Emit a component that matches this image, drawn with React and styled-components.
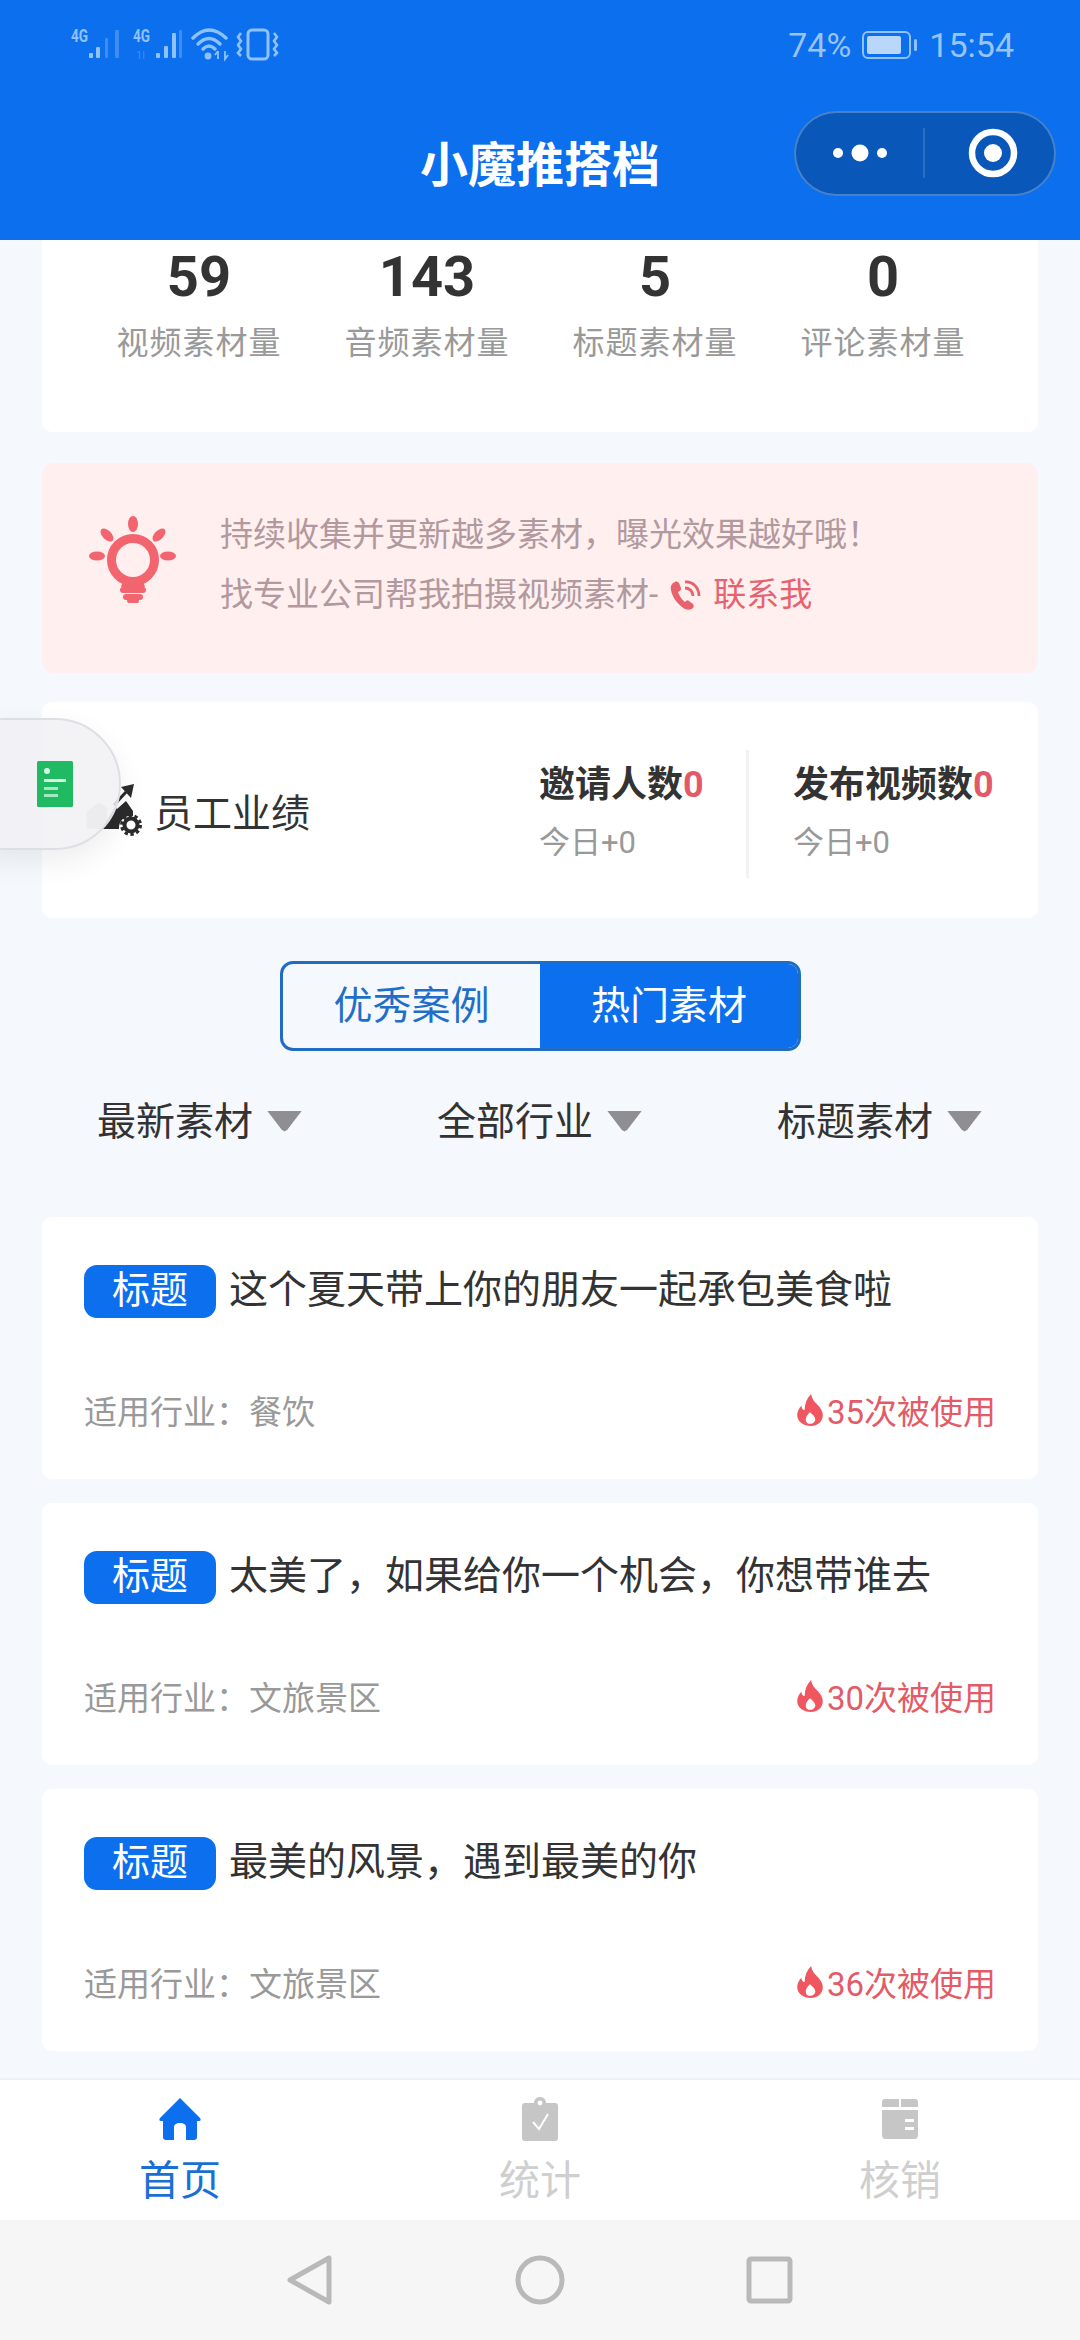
import React from "react";
import styled, { createGlobalStyle } from "styled-components";

const Global = createGlobalStyle`
  html, body { margin: 0; padding: 0; background: #f5f8fd; }
  * { box-sizing: border-box; }
  body { font-family: Roboto, "Noto Sans CJK SC", sans-serif; }
`;

const Page = styled.div`
  position: relative;
  width: 1080px;
  height: 2340px;
  overflow: hidden;
  display: flex;
  flex-direction: column;
  background: #f5f8fd;
`;
const TopBlue = styled.div`
  height: 240px;
  background: #0b6fee;
  flex: none;
`;
const StatusBar = styled.div`
  height: 70px;
  display: flex;
  justify-content: space-between;
  align-items: flex-start;
  padding: 24px 66px 0 68px;
  color: #98c4f8;
`;
const StatusRight = styled.div`
  display: flex;
  align-items: center;
  gap: 11px;
  font-size: 34px;
  line-height: 42px;
`;
const Header = styled.div`
  height: 170px;
  display: grid;
  grid-template-columns: 1fr auto 1fr;
  align-items: center;
`;
const Title = styled.h1`
  grid-column: 2;
  margin: 22px 0 0;
  font-size: 48px;
  line-height: 60px;
  font-weight: 700;
  color: #fff;
`;
const Capsule = styled.div`
  grid-column: 3;
  justify-self: end;
  margin: 0 24px 4px 0;
  width: 262px;
  height: 85px;
  border-radius: 43px;
  background: #0957b8;
  border: 2px solid rgba(255, 255, 255, 0.25);
  display: flex;
  align-items: center;
`;
const CapsuleCell = styled.div`
  width: 129px;
  height: 50px;
  display: flex;
  align-items: center;
  justify-content: center;
  padding-left: ${(p) => (p.$divider ? "0" : "6px")};
  border-right: ${(p) => (p.$divider ? "2px solid rgba(255,255,255,.14)" : "none")};
`;

const Main = styled.main`
  flex: 1;
  min-height: 0;
  overflow: hidden;
`;
const Card = styled.section`
  margin: 0 42px;
  background: #fff;
  border-radius: 10px;
`;
const StatsCard = styled(Card)`
  display: grid;
  grid-template-columns: repeat(4, 228px);
  padding: 2px 0 0 43px;
  height: 192px;
  border-radius: 0 0 10px 10px;
`;
const Stat = styled.div`
  text-align: center;
`;
const StatNumber = styled.div`
  font-size: 56px;
  line-height: 70px;
  font-weight: 700;
  color: #333;
`;
const StatLabel = styled.div`
  margin-top: 9px;
  font-size: 32px;
  line-height: 44px;
  color: #999;
  letter-spacing: 1px;
`;
const Banner = styled.section`
  margin: 31px 42px 0;
  height: 210px;
  background: #ffefef;
  border-radius: 12px;
  display: flex;
  align-items: center;
  padding: 0 0 6px 46px;
  gap: 42px;
`;
const BannerText = styled.div`
  font-size: 33px;
  line-height: 60px;
  color: #b2999e;
`;
const BannerLine = styled.div`
  display: flex;
  align-items: center;
  white-space: nowrap;
`;
const ContactLink = styled.span`
  display: inline-flex;
  align-items: center;
  gap: 9px;
  margin-left: 12px;
  color: #e8626e;
`;
const BulbWrap = styled.div`
  display: flex;
  margin-top: -8px;
`;
const StaffCard = styled(Card)`
  margin-top: 29px;
  height: 216px;
  display: flex;
  align-items: center;
  padding: 0 43px;
`;
const StaffName = styled.div`
  display: flex;
  align-items: center;
  gap: 11px;
  font-size: 39px;
  color: #333;
`;
const StaffStats = styled.div`
  margin: 8px 0 0 auto;
  display: flex;
`;
const StaffStat = styled.div`
  height: 128px;
  width: ${(p) => p.$w}px;
  padding-left: ${(p) => p.$pad || 0}px;
  border-right: ${(p) => (p.$divider ? "3px solid #f1f2f5" : "none")};
`;
const StaffTitle = styled.div`
  font-size: 36px;
  line-height: 70px;
  font-weight: 700;
  color: #333;
  white-space: nowrap;
`;
const RedValue = styled.span`
  color: #e4596a;
`;
const StaffSub = styled.div`
  font-size: 31px;
  line-height: 46px;
  color: #999;
`;
const TabSwitch = styled.div`
  margin: 43px 0 0 280px;
  width: 521px;
  height: 90px;
  border: 3px solid #1f6cc4;
  border-radius: 13px;
  display: grid;
  grid-template-columns: 257px 1fr;
  overflow: hidden;
`;
const TabItem = styled.div`
  display: flex;
  align-items: center;
  justify-content: center;
  padding-bottom: 8px;
  font-size: 39px;
  color: ${(p) => (p.$active ? "#fff" : "#1f6fc8")};
  background: ${(p) => (p.$active ? "#0b6fee" : "transparent")};
`;
const Filters = styled.div`
  margin-top: 46px;
  padding-left: 97px;
  height: 50px;
  display: grid;
  grid-template-columns: repeat(3, 340px);
`;
const FilterItem = styled.div`
  display: flex;
  align-items: center;
  gap: 14px;
  font-size: 39px;
  line-height: 50px;
  color: #333;
`;
const Caret = styled.span`
  width: 35px;
  height: 21px;
  margin-top: -2px;
  background: #8e8e93;
  clip-path: polygon(0 0, 100% 0, 58% 92%, 50% 100%, 42% 92%);
`;
const MaterialList = styled.div`
  margin-top: 70px;
  display: flex;
  flex-direction: column;
  gap: 24px;
`;
const MaterialCard = styled(Card)`
  padding: 48px 42px 47px;
`;
const MaterialHead = styled.div`
  display: flex;
  align-items: flex-start;
  gap: 13px;
`;
const MaterialTag = styled.span`
  width: 132px;
  height: 53px;
  background: #0b6fee;
  color: #fff;
  border-radius: 13px;
  font-size: 38px;
  line-height: 50px;
  text-align: center;
`;
const MaterialTitle = styled.div`
  font-size: 39px;
  line-height: 50px;
  color: #333;
  white-space: nowrap;
`;
const MaterialFoot = styled.div`
  margin-top: 70px;
  height: 44px;
  display: flex;
  justify-content: space-between;
  align-items: center;
`;
const Industry = styled.div`
  font-size: 33px;
  color: #999;
`;
const UsedCount = styled.div`
  display: flex;
  align-items: center;
  gap: 3px;
  font-size: 33px;
  color: #e35b67;
`;
const TabBar = styled.nav`
  flex: none;
  height: 142px;
  background: #fff;
  border-top: 2px solid #f0f1f4;
  display: grid;
  grid-template-columns: repeat(3, 360px);
  padding-top: 17px;
`;
const TabBarItem = styled.div`
  display: flex;
  flex-direction: column;
  align-items: center;
  font-size: 41px;
  color: ${(p) => (p.$active ? "#1a6fd6" : "#cfcfcf")};
`;
const TabIcon = styled.div`
  height: 44px;
  display: flex;
  align-items: center;
  justify-content: center;
`;
const TabLabel = styled.div`
  margin-top: 12px;
  line-height: 56px;
`;
const SystemNav = styled.div`
  flex: none;
  height: 120px;
  background: #f6f6f6;
  display: flex;
  align-items: center;
  justify-content: center;
  gap: 170px;
`;
const FloatPill = styled.div`
  position: absolute;
  left: -60px;
  top: 718px;
  width: 181px;
  height: 132px;
  border-radius: 66px;
  border: 2px solid #dedfe4;
  background: rgba(241, 241, 244, 0.86);
  box-shadow: 0 12px 30px rgba(0, 0, 0, 0.07);
  display: flex;
  align-items: center;
  padding-left: 95px;
`;

const L = "#8fc2fc";
const D = "#3f8cf2";

const LeftStatusIcons = () => (
  <svg width="215" height="38" viewBox="68 24 215 38">
    <g fontFamily="Roboto, sans-serif" fontWeight="700" fontSize="18" fill={L}>
      <text x="71" y="42" textLength="17" lengthAdjust="spacingAndGlyphs">4G</text>
      <text x="133" y="42" textLength="17" lengthAdjust="spacingAndGlyphs">4G</text>
    </g>
    <text x="136" y="59" fontFamily="Roboto, sans-serif" fontSize="11" fill={D}>1l</text>
    <rect x="89" y="53" width="4" height="5" rx="1" fill={L} />
    <rect x="96" y="47" width="4" height="11" rx="1" fill={L} />
    <rect x="105" y="38" width="3" height="20" rx="1" fill={D} />
    <rect x="115" y="30" width="4" height="28" rx="1" fill={D} />
    <rect x="156" y="53" width="4" height="5" rx="1" fill={L} />
    <rect x="164" y="46" width="4" height="12" rx="1" fill={L} />
    <rect x="172" y="33" width="4" height="25" rx="1" fill={L} />
    <rect x="179" y="30" width="3" height="28" rx="1" fill={D} />
    <g fill="none" stroke={L} strokeWidth="3.4" strokeLinecap="round">
      <path d="M193 38 Q209 22 226 38" />
      <path d="M198 44 Q209 33 220 44" />
      <path d="M203 49 Q209 43 215 49" />
    </g>
    <circle cx="208" cy="56" r="3.4" fill={L} />
    <path d="M218 51v8M215 55l3-4M225 51v8l3-4" fill="none" stroke={L} strokeWidth="1.8" />
    <rect x="248" y="30" width="20" height="29" rx="4" fill="none" stroke={L} strokeWidth="3" />
    <path
      d="M241 33l-3 4 3 4-3 4 3 4-3 4 3 3M274 33l3 4-3 4 3 4-3 4 3 4-3 3"
      fill="none"
      stroke={L}
      strokeWidth="2.6"
    />
  </svg>
);

const Battery = () => (
  <svg width="56" height="28" viewBox="0 0 56 28">
    <rect x="1" y="1" width="47" height="26" rx="5" fill="none" stroke="#8fc2fc" strokeWidth="2" />
    <rect x="5" y="5" width="34" height="18" rx="2" fill="#b9d7fb" />
    <rect x="52" y="8" width="3" height="12" rx="1.5" fill="#8fc2fc" />
  </svg>
);

const Dots = () => (
  <svg width="54" height="20" viewBox="0 0 54 20">
    <circle cx="5" cy="10" r="5" fill="#fff" />
    <circle cx="27" cy="10" r="8.5" fill="#fff" />
    <circle cx="49" cy="10" r="5" fill="#fff" />
  </svg>
);

const Target = () => (
  <svg width="52" height="50" viewBox="0 0 52 50">
    <circle cx="26" cy="25" r="21" fill="none" stroke="#fff" strokeWidth="6.5" />
    <circle cx="26" cy="25" r="9" fill="#fff" />
  </svg>
);

const Bulb = () => (
  <svg width="90" height="90" viewBox="88 518 90 90">
    <g fill="#f2646e">
      <ellipse cx="133" cy="526" rx="5" ry="8" />
      <ellipse cx="107" cy="537" rx="4.5" ry="8" transform="rotate(-45 107 537)" />
      <ellipse cx="159" cy="537" rx="4.5" ry="8" transform="rotate(45 159 537)" />
      <ellipse cx="97" cy="558" rx="8" ry="4.5" />
      <ellipse cx="168" cy="558" rx="8" ry="4.5" />
      <path d="M124 580h18l3 9h-24z" />
      <rect x="120" y="589" width="26" height="6" rx="3" />
      <rect x="123" y="596" width="20" height="6" rx="3" />
      <rect x="127" y="601" width="12" height="4" rx="2" />
    </g>
    <circle cx="133" cy="562" r="21.5" fill="none" stroke="#f2646e" strokeWidth="9" />
  </svg>
);

const Phone = () => (
  <svg width="34" height="32" viewBox="0 0 34 32">
    <path
      d="M5 3c-3 1-5 4-4 8 1 7 7 15 14 19 3 1 6 1 8-1 1-1 1-3 0-4l-4-3c-1-1-2-1-3 0l-1 1c-3-2-6-7-7-10l2-1c1-1 1-2 1-3L9 4C8 3 6 2 5 3z"
      fill="#e8626e"
    />
    <path d="M15 3c7-1 14 5 14 14M15 9c4 0 8 3 8 8" fill="none" stroke="#e8626e" strokeWidth="2.8" />
  </svg>
);

const StaffIcon = () => (
  <svg width="58" height="54" viewBox="85 782 58 54">
    <path d="M86 811l13-10 8 6v21H87z" fill="#cfcfcf" />
    <path d="M102 828l13-22 3 3 0 19z" fill="#2b2b2b" />
    <path d="M117 808l9-8 7 10v5a12 12 0 0 0-14 13h-2z" fill="#2b2b2b" />
    <path d="M114 804l12-13" stroke="#2b2b2b" strokeWidth="3" fill="none" />
    <path d="M121 786l13-3-3 14z" fill="#2b2b2b" />
    <circle cx="131" cy="824" r="6.5" fill="#fff" stroke="#2b2b2b" strokeWidth="4" />
    <circle cx="131" cy="824" r="9.5" fill="none" stroke="#2b2b2b" strokeWidth="3" strokeDasharray="3.4 2.6" />
  </svg>
);

const Doc = () => (
  <svg width="36" height="46" viewBox="0 0 36 46">
    <rect width="36" height="46" rx="1.5" fill="#1fba62" />
    <circle cx="10" cy="10" r="3" fill="#d6f5e2" />
    <rect x="7" y="18" width="22" height="3" fill="#d6f5e2" />
    <rect x="7" y="26" width="14" height="3" fill="#a5e7c2" />
    <rect x="7" y="33" width="14" height="3" fill="#a5e7c2" />
  </svg>
);

const Flame = () => (
  <svg width="28" height="32" viewBox="0 0 26 30">
    <path
      d="M14 0c1 5 3 7 6 10 3 3 5 6 5 10 0 6-5 10-11 10C7 30 1 26 1 20c0-4 2-7 4-9 0 2 1 4 3 4 0-6 2-11 6-15zM13 17c-2 2-4 4-4 7 0 2 1 4 4 4s5-2 5-4c0-3-3-5-5-7z"
      fill="#f0565f"
      fillRule="evenodd"
    />
  </svg>
);

const HomeIcon = () => (
  <svg width="42" height="42" viewBox="0 0 42 42">
    <path
      d="M21 0L41 20c1 1 1 3-1 3h-2v16c0 2-1 3-3 3h-8V29c0-2-2-4-6-4s-6 2-6 4v13H7c-2 0-3-1-3-3V23H2c-2 0-2-2-1-3z"
      fill="#0b6fee"
    />
  </svg>
);

const ClipIcon = () => (
  <svg width="36" height="44" viewBox="0 0 36 44">
    <path
      d="M3 6h9c0-4 3-6 6-6s6 2 6 6h9c2 0 3 1 3 3v32c0 2-1 3-3 3H3c-2 0-3-1-3-3V9c0-2 1-3 3-3z"
      fill="#c6c6c6"
    />
    <circle cx="18" cy="6" r="2.4" fill="#fff" />
    <path d="M11 25l6 7 9-15" fill="none" stroke="#fff" strokeWidth="2" />
  </svg>
);

const WalletIcon = () => (
  <svg width="38" height="40" viewBox="0 0 38 40">
    <path d="M4 0h14v8H1V3c0-2 1-3 3-3zM20 0h14c2 0 3 1 3 3v5H20z" fill="#c6c6c6" />
    <path d="M1 11h36v25c0 2-1 4-3 4H4c-2 0-3-2-3-4z" fill="#c6c6c6" />
    <rect x="24" y="20" width="9" height="3" fill="#fff" />
    <rect x="24" y="28" width="9" height="3" fill="#fff" />
  </svg>
);

const BackIcon = () => (
  <svg width="60" height="50" viewBox="0 0 60 50">
    <path d="M49 3v44L10 25z" fill="none" stroke="#b9b9b9" strokeWidth="5" strokeLinejoin="round" />
  </svg>
);
const HomeNavIcon = () => (
  <svg width="60" height="50" viewBox="0 0 60 50">
    <circle cx="30" cy="25" r="22" fill="none" stroke="#b9b9b9" strokeWidth="5" />
  </svg>
);
const RecentIcon = () => (
  <svg width="60" height="50" viewBox="0 0 60 50">
    <rect x="9" y="4" width="41" height="42" rx="2" fill="none" stroke="#b9b9b9" strokeWidth="5" />
  </svg>
);

const stats = [
  ["59", "视频素材量"],
  ["143", "音频素材量"],
  ["5", "标题素材量"],
  ["0", "评论素材量"],
];
const materials = [
  ["这个夏天带上你的朋友一起承包美食啦", "餐饮", 35],
  ["太美了，如果给你一个机会，你想带谁去", "文旅景区", 30],
  ["最美的风景，遇到最美的你", "文旅景区", 36],
];

export default function App() {
  return (
    <Page>
      <Global />
      <TopBlue>
        <StatusBar>
          <LeftStatusIcons />
          <StatusRight>
            <span>74%</span>
            <Battery />
            <span>15:54</span>
          </StatusRight>
        </StatusBar>
        <Header>
          <Title>小魔推搭档</Title>
          <Capsule>
            <CapsuleCell $divider>
              <Dots />
            </CapsuleCell>
            <CapsuleCell>
              <Target />
            </CapsuleCell>
          </Capsule>
        </Header>
      </TopBlue>

      <Main>
        <StatsCard>
          {stats.map(([n, l]) => (
            <Stat key={l}>
              <StatNumber>{n}</StatNumber>
              <StatLabel>{l}</StatLabel>
            </Stat>
          ))}
        </StatsCard>

        <Banner>
          <BulbWrap>
            <Bulb />
          </BulbWrap>
          <BannerText>
            <BannerLine>持续收集并更新越多素材，曝光效果越好哦！</BannerLine>
            <BannerLine>
              找专业公司帮我拍摄视频素材-
              <ContactLink>
                <Phone />
                联系我
              </ContactLink>
            </BannerLine>
          </BannerText>
        </Banner>

        <StaffCard>
          <StaffName>
            <StaffIcon />
            员工业绩
          </StaffName>
          <StaffStats>
            <StaffStat $w={210} $divider>
              <StaffTitle>
                邀请人数<RedValue>0</RedValue>
              </StaffTitle>
              <StaffSub>今日+0</StaffSub>
            </StaffStat>
            <StaffStat $w={246} $pad={44}>
              <StaffTitle>
                发布视频数<RedValue>0</RedValue>
              </StaffTitle>
              <StaffSub>今日+0</StaffSub>
            </StaffStat>
          </StaffStats>
        </StaffCard>

        <TabSwitch>
          <TabItem>优秀案例</TabItem>
          <TabItem $active>热门素材</TabItem>
        </TabSwitch>

        <Filters>
          {["最新素材", "全部行业", "标题素材"].map((f) => (
            <FilterItem key={f}>
              {f}
              <Caret />
            </FilterItem>
          ))}
        </Filters>

        <MaterialList>
          {materials.map(([t, ind, n]) => (
            <MaterialCard key={t}>
              <MaterialHead>
                <MaterialTag>标题</MaterialTag>
                <MaterialTitle>{t}</MaterialTitle>
              </MaterialHead>
              <MaterialFoot>
                <Industry>适用行业：{ind}</Industry>
                <UsedCount>
                  <Flame />
                  {n}次被使用
                </UsedCount>
              </MaterialFoot>
            </MaterialCard>
          ))}
        </MaterialList>
      </Main>

      <TabBar>
        <TabBarItem $active>
          <TabIcon>
            <HomeIcon />
          </TabIcon>
          <TabLabel>首页</TabLabel>
        </TabBarItem>
        <TabBarItem>
          <TabIcon>
            <ClipIcon />
          </TabIcon>
          <TabLabel>统计</TabLabel>
        </TabBarItem>
        <TabBarItem>
          <TabIcon>
            <WalletIcon />
          </TabIcon>
          <TabLabel>核销</TabLabel>
        </TabBarItem>
      </TabBar>
      <SystemNav>
        <BackIcon />
        <HomeNavIcon />
        <RecentIcon />
      </SystemNav>

      <FloatPill>
        <Doc />
      </FloatPill>
    </Page>
  );
}
